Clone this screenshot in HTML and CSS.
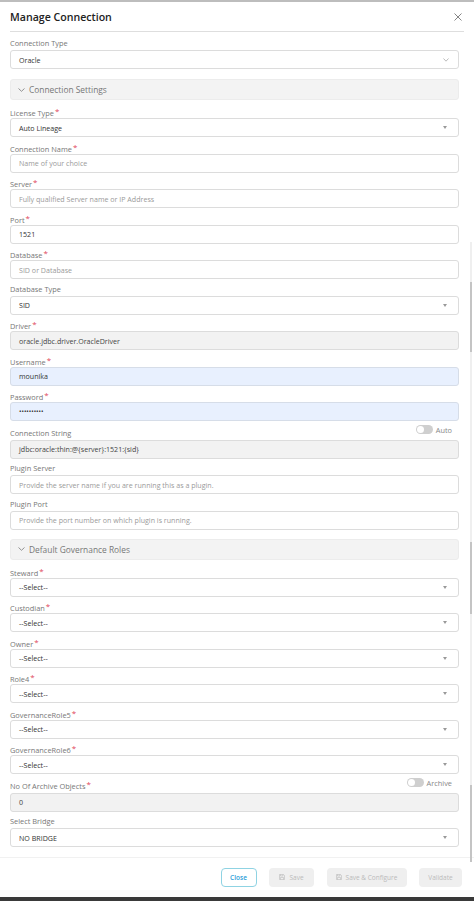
FILE: index.html
```html
<!DOCTYPE html>
<html lang="en">
<head>
<meta charset="utf-8">
<title>Manage Connection</title>
<link rel="stylesheet" href="styles.css">
</head>
<body>
<div class="top-bar"></div>
<div class="dialog">
  <header class="dlg-head">
    <h1 class="dlg-title">Manage Connection</h1>
    <span class="dlg-close"><svg width="8" height="8" viewBox="0 0 8 8"><path d="M0.5 0.5L7.5 7.5M7.5 0.5L0.5 7.5" stroke="#777" stroke-width="0.9" fill="none"/></svg></span>
  </header>

  <div class="dlg-body">
    <div class="field">
      <div class="label">Connection Type</div>
      <div class="input select-chev">Oracle<svg class="chev" width="6" height="4" viewBox="0 0 6 4"><path d="M0.5 0.5L3 3.2L5.5 0.5" stroke="#aaa" stroke-width="0.8" fill="none"/></svg></div>
    </div>

    <div class="section first"><svg class="sec-chev" width="7" height="4" viewBox="0 0 7 4"><path d="M0.5 0.5L3.5 3.3L6.5 0.5" stroke="#888" stroke-width="0.9" fill="none"/></svg>Connection Settings</div>

    <div class="field">
      <div class="label">License Type<span class="req">*</span></div>
      <div class="input select">Auto Lineage<span class="tri"></span></div>
    </div>
    <div class="field">
      <div class="label">Connection Name<span class="req">*</span></div>
      <div class="input placeholder">Name of your choice</div>
    </div>
    <div class="field">
      <div class="label">Server<span class="req">*</span></div>
      <div class="input placeholder">Fully qualified Server name or IP Address</div>
    </div>
    <div class="field">
      <div class="label">Port<span class="req">*</span></div>
      <div class="input">1521</div>
    </div>
    <div class="field">
      <div class="label">Database<span class="req">*</span></div>
      <div class="input placeholder">SID or Database</div>
    </div>
    <div class="field">
      <div class="label">Database Type</div>
      <div class="input select">SID<span class="tri"></span></div>
    </div>
    <div class="field">
      <div class="label">Driver<span class="req">*</span></div>
      <div class="input disabled">oracle.jdbc.driver.OracleDriver</div>
    </div>
    <div class="field">
      <div class="label">Username<span class="req">*</span></div>
      <div class="input filled">mounika</div>
    </div>
    <div class="field">
      <div class="label">Password<span class="req">*</span></div>
      <div class="input filled pw">••••••••••</div>
    </div>
    <div class="field">
      <div class="label toggle-row"><span>Connection String</span><span class="toggle"><span class="switch"></span>Auto</span></div>
      <div class="input disabled">jdbc:oracle:thin:@{server}:1521:{sid}</div>
    </div>
    <div class="field">
      <div class="label">Plugin Server</div>
      <div class="input placeholder">Provide the server name if you are running this as a plugin.</div>
    </div>
    <div class="field">
      <div class="label">Plugin Port</div>
      <div class="input placeholder">Provide the port number on which plugin is running.</div>
    </div>

    <div class="section"><svg class="sec-chev" width="7" height="4" viewBox="0 0 7 4"><path d="M0.5 0.5L3.5 3.3L6.5 0.5" stroke="#888" stroke-width="0.9" fill="none"/></svg>Default Governance Roles</div>

    <div class="field">
      <div class="label">Steward<span class="req">*</span></div>
      <div class="input select">--Select--<span class="tri"></span></div>
    </div>
    <div class="field">
      <div class="label">Custodian<span class="req">*</span></div>
      <div class="input select">--Select--<span class="tri"></span></div>
    </div>
    <div class="field">
      <div class="label">Owner<span class="req">*</span></div>
      <div class="input select">--Select--<span class="tri"></span></div>
    </div>
    <div class="field">
      <div class="label">Role4<span class="req">*</span></div>
      <div class="input select">--Select--<span class="tri"></span></div>
    </div>
    <div class="field">
      <div class="label">GovernanceRole5<span class="req">*</span></div>
      <div class="input select">--Select--<span class="tri"></span></div>
    </div>
    <div class="field">
      <div class="label">GovernanceRole6<span class="req">*</span></div>
      <div class="input select">--Select--<span class="tri"></span></div>
    </div>
    <div class="field">
      <div class="label toggle-row"><span>No Of Archive Objects<span class="req">*</span></span><span class="toggle"><span class="switch"></span>Archive</span></div>
      <div class="input disabled">0</div>
    </div>
    <div class="field">
      <div class="label">Select Bridge</div>
      <div class="input select">NO BRIDGE<span class="tri"></span></div>
    </div>
  </div>

  <footer class="dlg-foot">
    <span class="btn btn-close">Close</span>
    <span class="btn btn-dis btn-save"><svg width="6" height="6" viewBox="0 0 6 6"><path d="M0.5 0.5H4.5L5.5 1.5V5.5H0.5Z M1.5 0.5V2H4V0.5 M1.5 5.5V3.5H4.5V5.5" stroke="#bbb" stroke-width="0.6" fill="none"/></svg>Save</span>
    <span class="btn btn-dis btn-sc"><svg width="6" height="6" viewBox="0 0 6 6"><path d="M0.5 0.5H4.5L5.5 1.5V5.5H0.5Z M1.5 0.5V2H4V0.5 M1.5 5.5V3.5H4.5V5.5" stroke="#bbb" stroke-width="0.6" fill="none"/></svg>Save &amp; Configure</span>
    <span class="btn btn-dis btn-val">Validate</span>
  </footer>
  <div class="bottom-bar"></div>

  <div class="scroll-track"></div>
  <div class="scroll-thumb t1"></div>
  <div class="scroll-thumb t2"></div>
  <div class="scroll-thumb t3"></div>
</div>
</body>
</html>
```

FILE: styles.css
```css
* { box-sizing: border-box; }
html, body { margin: 0; padding: 0; background: #fff; }
body {
  font-family: "Open Sans", "Liberation Sans", sans-serif;
  color: #333;
  width: 474px;
  height: 901px;
  overflow: hidden;
}
.top-bar { height: 2px; background: #bdbdbd; }
.dialog { position: relative; height: 899px; }

.dlg-head {
  height: 30px;
  margin: 0 10px 0 10px;
  padding-right: 2px;
  display: flex;
  align-items: center;
  justify-content: space-between;
  border-bottom: 1px solid #dedede;
}
.dlg-title {
  margin: 0;
  font-size: 10.6px;
  font-weight: 600;
  color: #222;
}
.dlg-close { display: flex; width: 8px; height: 8px; }

.dlg-body { padding: 5px 15px 0 10px; }

.field { margin-bottom: 3.5px; }
.label {
  height: 12px;
  line-height: 12px;
  font-size: 7.4px;
  color: #777;
  margin-bottom: 1px;
  white-space: nowrap;
}
.req { color: #e0455a; font-size: 8px; vertical-align: 2px; margin-left: 1px; }

.input {
  height: 19px;
  border: 1px solid #dcdcdc;
  border-radius: 3px;
  padding: 0 8px;
  display: flex;
  align-items: center;
  justify-content: space-between;
  font-size: 7.1px;
  color: #333;
  background: #fff;
  white-space: nowrap;
}
.placeholder { color: #9a9a9a; }
.disabled { background: #f2f2f2; color: #444; }
.filled { background: #e8f0fe; border-color: #d6dde8; }
.pw { font-size: 6.5px; letter-spacing: 0; }
.select-chev .chev { margin-right: 1px; }
.select { padding-right: 11px; }
.tri {
  width: 0; height: 0;
  border-left: 2.5px solid transparent;
  border-right: 2.5px solid transparent;
  border-top: 3px solid #999;
}

.section {
  height: 21px;
  margin: 9px 0 5px 0;
  background: #f3f3f3;
  border: 1px solid #ececec;
  border-radius: 3px;
  display: flex;
  align-items: center;
  padding-left: 7px;
  font-size: 8.4px;
  color: #777;
}
.section.first { margin-top: 10px; }
.sec-chev { margin-right: 4px; }

.toggle-row {
  display: flex;
  justify-content: space-between;
  align-items: flex-end;
  height: 14px;
  line-height: 12px;
}
.toggle {
  display: flex;
  align-items: center;
  align-self: flex-start;
  color: #888;
  font-size: 7.4px;
  margin-right: 7px;
  line-height: 10px;
}
.switch {
  width: 17px; height: 9px;
  border-radius: 5px;
  background: #cfcfcf;
  position: relative;
  margin-right: 3px;
}
.switch::before {
  content: "";
  position: absolute;
  left: 1px; top: 1px;
  width: 7px; height: 7px;
  border-radius: 50%;
  background: #fff;
}

.dlg-foot {
  margin-top: 10px;
  border-top: 1px solid #f1f1f1;
  height: 39px;
  display: flex;
  justify-content: flex-end;
  align-items: center;
  gap: 12.5px;
  padding-right: 12px;
}
.btn {
  height: 19px;
  border-radius: 4px;
  display: inline-flex;
  align-items: center;
  justify-content: center;
  font-size: 6.5px;
}
.btn svg { margin-right: 4px; }
.btn-close {
  width: 36px;
  border: 1px solid #8fd3e3;
  color: #2d9ed8;
  font-weight: 600;
}
.btn-dis { background: #efefef; color: #bbb; }
.btn-save { width: 45px; }
.btn-sc { width: 80px; }
.btn-val { width: 43px; }

.bottom-bar {
  position: absolute;
  left: 0; right: 0; bottom: 0;
  height: 4px;
  background: #3a3a3a;
}

.scroll-track {
  position: absolute;
  left: 470px; top: 240px;
  width: 2px; height: 620px;
  background: #efefef;
}
.scroll-thumb {
  position: absolute;
  left: 470px;
  width: 2px;
  background: #c4c4c4;
}
.t1 { top: 280px; height: 70px; }
.t2 { top: 540px; height: 72px; }
.t3 { top: 783px; height: 77px; }
```
